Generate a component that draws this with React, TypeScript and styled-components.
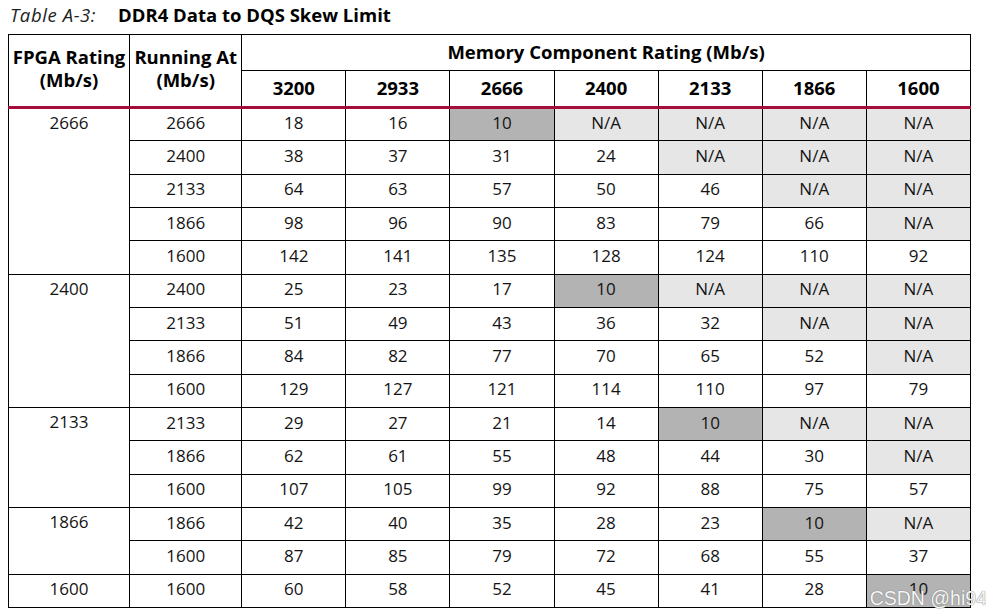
import React from "react";
import styled, { createGlobalStyle } from "styled-components";

const Global = createGlobalStyle`
  html, body { margin: 0; padding: 0; background: #fff; }
  body { font-family: "Open Sans", "Liberation Sans", sans-serif; color: #111; }
`;

const Page = styled.div`
  position: relative;
  width: 986px;
  height: 616px;
  overflow: hidden;
  padding: 0 0 0 8px;
  box-sizing: border-box;
`;

const Caption = styled.div`
  display: flex;
  align-items: center;
  height: 28px;
  padding-left: 2px;
  gap: 22px;
`;

const CaptionLabel = styled.span`
  font-style: italic;
  font-size: 18.5px;
  letter-spacing: 0.6px;
  color: #222;
`;

const CaptionTitle = styled.span`
  font-weight: 700;
  font-size: 18.5px;
  color: #000;
`;

const Table = styled.table`
  margin-top: 6px;
  border-collapse: collapse;
  table-layout: fixed;
  width: 963px;
  font-size: 17px;
`;

const Col = styled.col<{ $w: number }>`
  width: ${(p) => p.$w}px;
`;

const HeadCell = styled.th<{ $tall?: boolean; $red?: boolean }>`
  border: 1px solid #000;
  ${(p) => (p.$red ? "border-bottom: 3px solid #a50e3a;" : "")}
  font-weight: 700;
  font-size: 18.5px;
  color: #000;
  text-align: center;
  vertical-align: ${(p) => (p.$tall ? "top" : "middle")};
  padding: ${(p) => (p.$tall ? "10px 0 0" : "0 0 1px")};
  line-height: ${(p) => (p.$tall ? "23px" : "22px")};
  white-space: nowrap;
`;

const HeadRow = styled.tr<{ $h: number }>`
  height: ${(p) => p.$h}px;
`;

const DataRow = styled.tr`
  height: 33.33px;
`;

const Cell = styled.td<{ $shade?: "dark" | "light"; $top?: boolean }>`
  border: 1px solid #000;
  text-align: center;
  vertical-align: ${(p) => (p.$top ? "top" : "middle")};
  padding: ${(p) => (p.$top ? "3px 0 0" : "0 0 3px")};
  line-height: 22px;
  color: #141414;
  background: ${(p) =>
    p.$shade === "dark" ? "#b3b3b3" : p.$shade === "light" ? "#e6e6e6" : "#fff"};
`;

const Watermark = styled.div`
  position: absolute;
  right: -1px;
  bottom: 6px;
  font-family: "Liberation Sans", Arial, sans-serif;
  font-size: 19.5px;
  color: #f6f6f6;
  text-shadow: 0 0 1px #808080, 0 0 1px #808080;
  pointer-events: none;
`;

type Val = number | "NA" | "D";

const groups: { fpga: number; rows: { at: number; v: Val[] }[] }[] = [
  {
    fpga: 2666,
    rows: [
      { at: 2666, v: [18, 16, "D", "NA", "NA", "NA", "NA"] },
      { at: 2400, v: [38, 37, 31, 24, "NA", "NA", "NA"] },
      { at: 2133, v: [64, 63, 57, 50, 46, "NA", "NA"] },
      { at: 1866, v: [98, 96, 90, 83, 79, 66, "NA"] },
      { at: 1600, v: [142, 141, 135, 128, 124, 110, 92] },
    ],
  },
  {
    fpga: 2400,
    rows: [
      { at: 2400, v: [25, 23, 17, "D", "NA", "NA", "NA"] },
      { at: 2133, v: [51, 49, 43, 36, 32, "NA", "NA"] },
      { at: 1866, v: [84, 82, 77, 70, 65, 52, "NA"] },
      { at: 1600, v: [129, 127, 121, 114, 110, 97, 79] },
    ],
  },
  {
    fpga: 2133,
    rows: [
      { at: 2133, v: [29, 27, 21, 14, "D", "NA", "NA"] },
      { at: 1866, v: [62, 61, 55, 48, 44, 30, "NA"] },
      { at: 1600, v: [107, 105, 99, 92, 88, 75, 57] },
    ],
  },
  {
    fpga: 1866,
    rows: [
      { at: 1866, v: [42, 40, 35, 28, 23, "D", "NA"] },
      { at: 1600, v: [87, 85, 79, 72, 68, 55, 37] },
    ],
  },
  {
    fpga: 1600,
    rows: [{ at: 1600, v: [60, 58, 52, 45, 41, 28, "D"] }],
  },
];

const ratings = [3200, 2933, 2666, 2400, 2133, 1866, 1600];

export default function App() {
  return (
    <Page>
      <Global />
      <Caption>
        <CaptionLabel>Table A-3:</CaptionLabel>
        <CaptionTitle>DDR4 Data to DQS Skew Limit</CaptionTitle>
      </Caption>
      <Table>
        <colgroup>
          <Col $w={121} />
          <Col $w={112} />
          {ratings.map((r) => (
            <Col key={r} $w={104} />
          ))}
        </colgroup>
        <thead>
          <HeadRow $h={36}>
            <HeadCell rowSpan={2} $tall $red>
              FPGA Rating
              <br />
              (Mb/s)
            </HeadCell>
            <HeadCell rowSpan={2} $tall $red>
              Running At
              <br />
              (Mb/s)
            </HeadCell>
            <HeadCell colSpan={7}>Memory Component Rating (Mb/s)</HeadCell>
          </HeadRow>
          <HeadRow $h={37}>
            {ratings.map((r) => (
              <HeadCell key={r} $red>
                {r}
              </HeadCell>
            ))}
          </HeadRow>
        </thead>
        <tbody>
          {groups.map((g) =>
            g.rows.map((row, i) => (
              <DataRow key={`${g.fpga}-${row.at}`}>
                {i === 0 && (
                  <Cell rowSpan={g.rows.length} $top>
                    {g.fpga}
                  </Cell>
                )}
                <Cell>{row.at}</Cell>
                {row.v.map((v, j) => (
                  <Cell
                    key={j}
                    $shade={v === "D" ? "dark" : v === "NA" ? "light" : undefined}
                  >
                    {v === "D" ? 10 : v === "NA" ? "N/A" : v}
                  </Cell>
                ))}
              </DataRow>
            ))
          )}
        </tbody>
      </Table>
      <Watermark>CSDN @hi94</Watermark>
    </Page>
  );
}
